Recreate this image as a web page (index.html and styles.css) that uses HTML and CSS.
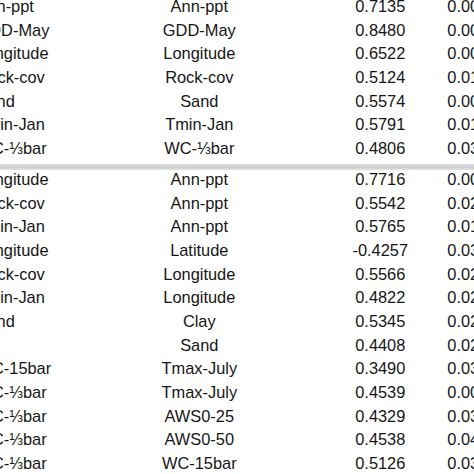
FILE: index.html
```html
<!DOCTYPE html>
<html lang="en">
<head>
<meta charset="utf-8">
<title>Correlation table</title>
<link rel="stylesheet" href="styles.css">
</head>
<body>
<div class="table">
  <div class="group">
    <div class="row"><span class="c1">Ann-ppt</span><span class="c2">Ann-ppt</span><span class="c3">0.7135</span><span class="c4">0.0041</span></div>
    <div class="row"><span class="c1">GDD-May</span><span class="c2">GDD-May</span><span class="c3">0.8480</span><span class="c4">0.0006</span></div>
    <div class="row"><span class="c1">Longitude</span><span class="c2">Longitude</span><span class="c3">0.6522</span><span class="c4">0.0092</span></div>
    <div class="row"><span class="c1">Rock-cov</span><span class="c2">Rock-cov</span><span class="c3">0.5124</span><span class="c4">0.0175</span></div>
    <div class="row"><span class="c1">Sand</span><span class="c2">Sand</span><span class="c3">0.5574</span><span class="c4">0.0083</span></div>
    <div class="row"><span class="c1">Tmin-Jan</span><span class="c2">Tmin-Jan</span><span class="c3">0.5791</span><span class="c4">0.0142</span></div>
    <div class="row"><span class="c1">WC-⅓bar</span><span class="c2">WC-⅓bar</span><span class="c3">0.4806</span><span class="c4">0.0318</span></div>
  </div>
  <div class="divider"></div>
  <div class="group">
    <div class="row"><span class="c1">Longitude</span><span class="c2">Ann-ppt</span><span class="c3">0.7716</span><span class="c4">0.0027</span></div>
    <div class="row"><span class="c1">Rock-cov</span><span class="c2">Ann-ppt</span><span class="c3">0.5542</span><span class="c4">0.0214</span></div>
    <div class="row"><span class="c1">Tmin-Jan</span><span class="c2">Ann-ppt</span><span class="c3">0.5765</span><span class="c4">0.0163</span></div>
    <div class="row"><span class="c1">Longitude</span><span class="c2">Latitude</span><span class="c3">-0.4257</span><span class="c4">0.0351</span></div>
    <div class="row"><span class="c1">Rock-cov</span><span class="c2">Longitude</span><span class="c3">0.5566</span><span class="c4">0.0206</span></div>
    <div class="row"><span class="c1">Tmin-Jan</span><span class="c2">Longitude</span><span class="c3">0.4822</span><span class="c4">0.0249</span></div>
    <div class="row"><span class="c1">Sand</span><span class="c2">Clay</span><span class="c3">0.5345</span><span class="c4">0.0231</span></div>
    <div class="row"><span class="c1"></span><span class="c2">Sand</span><span class="c3">0.4408</span><span class="c4">0.0287</span></div>
    <div class="row"><span class="c1">WC-15bar</span><span class="c2">Tmax-July</span><span class="c3">0.3490</span><span class="c4">0.0372</span></div>
    <div class="row"><span class="c1">WC-⅓bar</span><span class="c2">Tmax-July</span><span class="c3">0.4539</span><span class="c4">0.0068</span></div>
    <div class="row"><span class="c1">WC-⅓bar</span><span class="c2">AWS0-25</span><span class="c3">0.4329</span><span class="c4">0.0325</span></div>
    <div class="row"><span class="c1">WC-⅓bar</span><span class="c2">AWS0-50</span><span class="c3">0.4538</span><span class="c4">0.0416</span></div>
    <div class="row"><span class="c1">WC-⅓bar</span><span class="c2">WC-15bar</span><span class="c3">0.5126</span><span class="c4">0.0339</span></div>
  </div>
</div>
</body>
</html>
```

FILE: styles.css
```css
html, body {
  margin: 0;
  padding: 0;
  width: 474px;
  height: 474px;
  overflow: hidden;
  background: #ffffff;
}

.table {
  width: 560px;
  margin-left: -23.5px;
  margin-top: -4.83px;
  font-family: "Liberation Sans", Arial, sans-serif;
  font-size: 16.4px;
  color: #161616;
}

.row {
  display: grid;
  grid-template-columns: 171.5px 102.6px 179.4px 1fr;
  height: 23.67px;
  line-height: 23.67px;
  white-space: nowrap;
}

.c1 {
  text-align: left;
}

.c2 {
  text-align: center;
}

.c3 {
  text-align: center;
  padding-left: 80px;
}

.c4 {
  text-align: left;
  padding-left: 17.3px;
}

.divider {
  height: 6px;
  margin-top: 3.2px;
  margin-bottom: -1.87px;
  background: linear-gradient(#e2e2e2, #cdcdcd 50%, #e2e2e2);
}
```
